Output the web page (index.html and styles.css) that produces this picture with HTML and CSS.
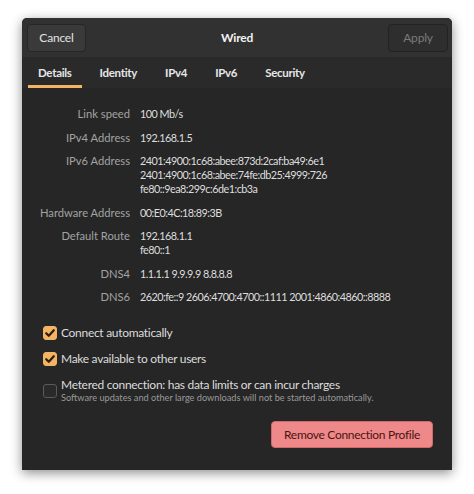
FILE: index.html
```html
<!DOCTYPE html>
<html>
<head>
<meta charset="utf-8">
<link rel="stylesheet" href="styles.css">
</head>
<body>
<div class="window">
  <div class="header">
    <button class="btn btn-cancel">Cancel</button>
    <div class="title">Wired</div>
    <button class="btn btn-apply">Apply</button>
  </div>
  <div class="tabs">
    <div class="tab active">Details</div>
    <div class="tab">Identity</div>
    <div class="tab">IPv4</div>
    <div class="tab">IPv6</div>
    <div class="tab">Security</div>
  </div>
  <div class="content">
    <div class="details">
      <div class="label">Link speed</div>
      <div class="value">100 Mb/s</div>
      <div class="label">IPv4 Address</div>
      <div class="value">192.168.1.5</div>
      <div class="label">IPv6 Address</div>
      <div class="value">2401:4900:1c68:abee:873d:2caf:ba49:6e1<br>2401:4900:1c68:abee:74fe:db25:4999:726<br>fe80::9ea8:299c:6de1:cb3a</div>
      <div class="label">Hardware Address</div>
      <div class="value">00:E0:4C:18:89:3B</div>
      <div class="label">Default Route</div>
      <div class="value">192.168.1.1<br>fe80::1</div>
      <div class="label">DNS4</div>
      <div class="value">1.1.1.1 9.9.9.9 8.8.8.8</div>
      <div class="label">DNS6</div>
      <div class="value">2620:fe::9 2606:4700:4700::1111 2001:4860:4860::8888</div>
    </div>
    <div class="checks">
      <div class="check">
        <span class="box checked"><svg viewBox="0 0 14 14" width="14" height="14"><path d="M3.2 7.2 L5.8 9.8 L10.8 4.2" fill="none" stroke="#2a1d0a" stroke-width="2.2" stroke-linecap="round" stroke-linejoin="round"/></svg></span>
        <span class="check-text">Connect automatically</span>
      </div>
      <div class="check">
        <span class="box checked"><svg viewBox="0 0 14 14" width="14" height="14"><path d="M3.2 7.2 L5.8 9.8 L10.8 4.2" fill="none" stroke="#2a1d0a" stroke-width="2.2" stroke-linecap="round" stroke-linejoin="round"/></svg></span>
        <span class="check-text">Make available to other users</span>
      </div>
      <div class="check">
        <span class="box"></span>
        <span class="check-text">Metered connection: has data limits or can incur charges<span class="sub">Software updates and other large downloads will not be started automatically.</span></span>
      </div>
    </div>
    <div class="actions">
      <button class="btn-remove">Remove Connection Profile</button>
    </div>
  </div>
</div>
</body>
</html>
```

FILE: styles.css
```css
* { box-sizing: border-box; }
html, body { margin: 0; padding: 0; background: #ffffff; }
body {
  font-family: Lato, "Noto Sans", sans-serif;
  font-size: 12px;
  width: 474px;
  height: 494px;
  overflow: hidden;
}
.window {
  margin: 18px 0 0 22px;
  width: 430px;
  height: 452px;
  background: #262626;
  border-radius: 5px 5px 0 0;
  box-shadow: 0 3px 12px rgba(0,0,0,0.45);
  display: flex;
  flex-direction: column;
}
.header {
  height: 39px;
  background: #313131;
  border-radius: 5px 5px 0 0;
  display: flex;
  align-items: center;
  justify-content: space-between;
  padding: 0 4px 0 5px;
}
.btn {
  font-family: inherit;
  font-size: 12px;
  letter-spacing: -0.2px;
  height: 28px;
  border-radius: 4px;
  padding: 0;
}
.btn-cancel {
  width: 59px;
  background: #3a3a3a;
  border: 1px solid #262626;
  color: #e2e2e2;
}
.btn-apply {
  width: 60px;
  background: #2e2e2e;
  border: 1px solid #222222;
  color: #7a7a7a;
}
.title {
  color: #f2f2f2;
  font-weight: bold;
  font-size: 12px;
  letter-spacing: -0.2px;
}
.tabs {
  height: 31px;
  background: #2a2a2a;
  display: flex;
  align-items: stretch;
  padding-left: 6px;
  gap: 8px;
}
.tab {
  color: #e6e6e6;
  font-weight: bold;
  font-size: 11.5px;
  letter-spacing: -0.3px;
  padding: 0 10px;
  display: flex;
  align-items: center;
  border-bottom: 3px solid transparent;
  padding-top: 3px;
}
.tab.active { border-bottom-color: #f3b463; }
.content {
  flex: 1;
  display: flex;
  flex-direction: column;
}
.details {
  display: grid;
  grid-template-columns: 108px 1fr;
  column-gap: 10px;
  row-gap: 9.5px;
  padding-top: 19px;
  line-height: 14px;
}
.label { color: #a3a3a3; text-align: right; font-size: 11.2px; }
.value { color: #dedede; font-size: 10.8px; letter-spacing: -0.5px; }
.checks {
  display: flex;
  flex-direction: column;
  gap: 12px;
  padding: 22px 0 0 21px;
}
.check {
  display: flex;
  align-items: center;
  gap: 4px;
  color: #dcdcdc;
  font-size: 12px;
  letter-spacing: -0.3px;
  line-height: 14px;
}
.box {
  width: 14px;
  height: 14px;
  border-radius: 3px;
  border: 1px solid #5a5a5a;
  background: #2a2a2a;
  display: flex;
  flex-shrink: 0;
}
.box.checked { background: #f3b463; border-color: #f3b463; }
.box svg { display: block; margin: -1px; }
.check-text { display: flex; flex-direction: column; }
.sub { font-size: 9.2px; letter-spacing: 0; color: #9a9a9a; line-height: 11px; }
.actions {
  display: flex;
  justify-content: flex-end;
  padding: 18px 19px 0 0;
}
.btn-remove {
  font-family: inherit;
  font-size: 12px;
  letter-spacing: -0.3px;
  width: 162px;
  height: 27px;
  background: #ef8888;
  color: #4a1414;
  border: 1px solid #d06a6a;
  border-radius: 4px;
  padding: 0;
}
```
